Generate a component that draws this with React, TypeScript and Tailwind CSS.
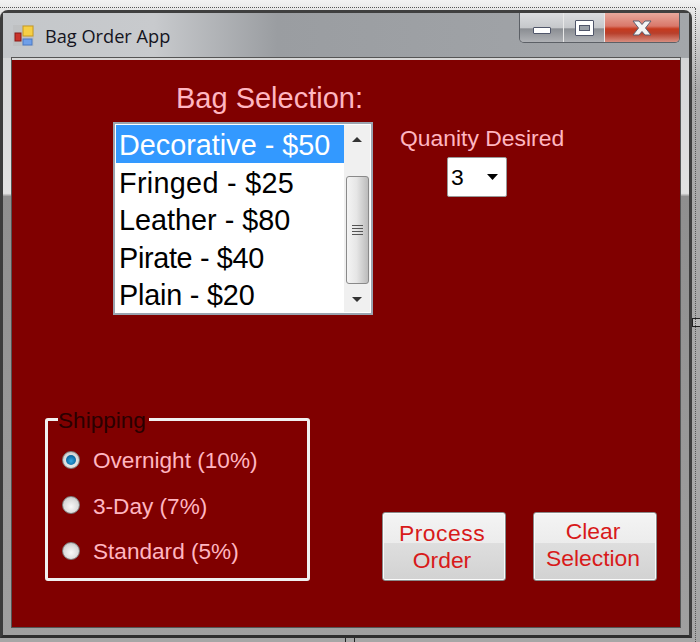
const sans = "font-['Liberation_Sans',Arial,sans-serif]";

function Radio({ label, checked }: { label: string; checked?: boolean }) {
  return (
    <div className="flex h-[45.5px] items-center gap-[13px]">
      <span className="mb-[4px] flex h-[18px] w-[18px] items-center justify-center rounded-full border border-[#7d7d7d] bg-[radial-gradient(circle_at_50%_60%,#f8f8f8_0%,#dcdcdc_55%,#b5b5b5_100%)]">
        {checked && <span className="h-[10px] w-[10px] rounded-full bg-[radial-gradient(circle_at_50%_60%,#35a4e0_0%,#0f6ea8_60%,#0a4f7c_100%)]" />}
      </span>
      <span className="text-[22.6px] leading-none text-[#ffb6c1]">{label}</span>
    </div>
  );
}

function FormButton({ lines, shift }: { lines: { text: string; cls: string }[]; shift: string }) {
  return (
    <button className="relative flex h-[69px] w-[124px] flex-col items-center justify-start rounded-[3px] border border-[#8a8a8a] bg-[linear-gradient(to_bottom,#f4f4f4_0%,#ececec_45%,#dedede_45%,#d2d2d2_100%)] pr-[4px] shadow-[inset_0_0_0_1px_#fbfbfb]">
      <span className={`text-[22.9px] leading-[27px] text-[#d81a1a] ${shift}`}>
        {lines.map((l) => (
          <span key={l.text} className={`block ${l.cls}`}>{l.text}</span>
        ))}
      </span>
    </button>
  );
}

export default function App() {
  const items = [
    { text: "Decorative - $50", cls: "bg-[#3399ff] text-white" },
    { text: "Fringed - $25", cls: "text-black tracking-[0.3px]" },
    { text: "Leather - $80", cls: "text-black" },
    { text: "Pirate - $40", cls: "text-black tracking-[-0.33px]" },
    { text: "Plain - $20", cls: "text-black tracking-[-0.2px]" },
  ];
  return (
    <div className={`${sans} relative h-[642px] w-[700px] overflow-hidden bg-[linear-gradient(to_bottom,#f2f2f2_0%,#e4e4e4_2%,#c0c0c0_9%,#a9a9a9_14%,#a6a6a6_100%)] pt-[10px]`}>
      <div className="h-[628px] w-[692px] rounded-t-[8px] border-x-[3px] border-y-[3px] border-x-[#3c3c3c] border-t-[#3f3f3f] border-b-[#2e2e2e] bg-[linear-gradient(to_bottom,#cfd1d3_0%,#e2e2e2_29%,#8f8f8f_29.5%,#a0a0a0_100%)]">
        <div className="flex h-[45px] items-start justify-between bg-[linear-gradient(to_right,#c4c7ca_0%,#c8cacd_22%,#9a9da1_40%,#a3a6aa_100%)]">
          <div className="flex items-center gap-[10px] pl-[10px] pt-[12px]">
            <svg width="22" height="22" viewBox="0 0 22 22">
              <rect x="0" y="0" width="21" height="21" fill="#b8b8b8" opacity="0.45" />
              <rect x="2" y="8" width="6" height="8" fill="#c9332b" stroke="#8a1a16" />
              <rect x="10" y="1" width="10" height="10" fill="#f6cf45" stroke="#c79a20" />
              <rect x="10" y="14" width="9" height="6" fill="#6f9fe8" stroke="#4a79c4" />
            </svg>
            <span className="font-['Open_Sans',sans-serif] text-[18.2px] leading-none text-[#14141e]">Bag Order App</span>
          </div>
          <div className="mr-[9px] flex h-[30px] w-[161px] overflow-hidden rounded-b-[5px] border-x border-b border-[#5c6066]">
            <div className="flex w-[44px] items-center justify-center border-r border-[#e8e8e8] bg-[linear-gradient(to_bottom,#dcdde0_0%,#c6c8cb_50%,#8b8e93_55%,#b0b2b6_100%)] pt-[6px]">
              <span className="h-[7px] w-[18px] rounded-[1px] border border-[#50566a] bg-white" />
            </div>
            <div className="flex w-[41px] items-center justify-center border-r border-[#e8e8e8] bg-[linear-gradient(to_bottom,#dcdde0_0%,#c6c8cb_50%,#8b8e93_55%,#b0b2b6_100%)]">
              <span className="flex h-[16px] w-[19px] items-center justify-center rounded-[1px] border border-[#50566a] bg-white">
                <span className="h-[6px] w-[11px] border border-[#50566a] bg-[#9aa0a8]" />
              </span>
            </div>
            <div className="flex flex-1 items-center justify-center bg-[linear-gradient(to_bottom,#e8a89c_0%,#d9786a_45%,#c63a1e_55%,#b8402c_70%,#d88e80_100%)]">
              <svg width="20" height="16" viewBox="0 0 20 16">
                <path d="M1 1h6l3 3.5L13 1h6l-5.5 7L19 15h-6l-3-3.5L7 15H1l5.5-7z" fill="#f4f4f4" stroke="#5b5f70" strokeWidth="1" />
              </svg>
            </div>
          </div>
        </div>
        <div className="px-[9px]">
          <div className="flex h-[569px] w-[668px] flex-col border-t-2 border-t-[#d8d8d8] bg-[#800000] pb-[46px] pt-[22px] outline-1 outline-[#555]">
            <div className="flex items-start">
              <div className="ml-[101px] w-[260px]">
                <div className="pr-[10px] text-right text-[29px] leading-[32px] text-[#ffb6c1]">Bag Selection:</div>
                <div className="mt-[8px] flex h-[193px] w-[260px] border-2 border-[#9aa4b0] bg-white p-px">
                  <div className="flex-1">
                    {items.map((t) => (
                      <div key={t.text} className={`h-[37.5px] pl-[3px] text-[28.8px] leading-[40px] ${t.cls}`}>
                        {t.text}
                      </div>
                    ))}
                  </div>
                  <div className="flex w-[26px] flex-col items-center bg-[#f0f0f0] pt-[11px]">
                    <svg width="12" height="7" viewBox="0 0 12 7"><path d="M6 1l5 5H1z" fill="#333" /></svg>
                    <div className="mt-[33px] flex h-[108px] w-[23px] items-center justify-center rounded-[3px] border border-[#8a8a8a] bg-[linear-gradient(to_right,#f4f4f4_0%,#e6e6e6_45%,#bcbcbc_100%)]">
                      <div className="flex w-[11px] flex-col gap-[2px]">
                        <span className="h-px bg-[#555]" />
                        <span className="h-px bg-[#555]" />
                        <span className="h-px bg-[#555]" />
                        <span className="h-px bg-[#555]" />
                      </div>
                    </div>
                    <svg className="mt-[12px]" width="12" height="7" viewBox="0 0 12 7"><path d="M6 6L1 1h10z" fill="#333" /></svg>
                  </div>
                </div>
              </div>
              <div className="ml-[27px] mt-[43px]">
                <div className="text-[22.9px] leading-[26px] text-[#ffb6c1]">Quanity Desired</div>
                <div className="ml-[47px] mt-[6px] flex h-[40px] w-[60px] items-center justify-between rounded-[2px] border border-[#999] bg-white pl-[3px] pr-[8px]">
                  <span className="text-[22.9px] leading-none text-black">3</span>
                  <svg width="11" height="6" viewBox="0 0 11 6"><path d="M0 0h11L5.5 6z" fill="#000" /></svg>
                </div>
              </div>
            </div>
            <div className="mt-auto flex items-end">
              <fieldset className="ml-[33px] h-[177px] w-[265px] rounded-[3px] border-[3px] border-[#f0f0f0] pl-[14px] pt-[5px]">
                <legend className="ml-[-4px] pr-[3px] pt-[4px] text-[22.6px] leading-[26px] text-[#2a0000]">Shipping</legend>
                {[
                  { label: "Overnight (10%)", checked: true },
                  { label: "3-Day (7%)" },
                  { label: "Standard (5%)" },
                ].map((r) => (
                  <Radio key={r.label} label={r.label} checked={r.checked} />
                ))}
              </fieldset>
              <div className="ml-[72px] flex gap-[27px]">
                <FormButton lines={[{ text: "Process", cls: "tracking-[0.5px]" }, { text: "Order", cls: "" }]} shift="mt-[7px]" />
                <FormButton lines={[{ text: "Clear", cls: "" }, { text: "Selection", cls: "" }]} shift="mt-[5px]" />
              </div>
            </div>
          </div>
        </div>
      </div>
      <div className="absolute left-[692px] top-[318px] h-[9px] w-[8px] border-y border-l border-[#222] bg-[#bbb]" />
      <div className="absolute left-[345px] top-[638px] h-[4px] w-[10px] border-x border-[#222]" />
      <div className="absolute left-[695px] top-[8px] h-[634px] w-px border-l border-dotted border-[#555]" />
      <div className="absolute left-0 top-[7px] h-px w-[695px] border-t border-dotted border-[#555]" />
    </div>
  );
}
